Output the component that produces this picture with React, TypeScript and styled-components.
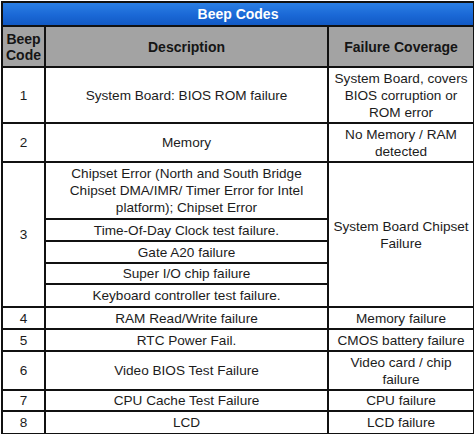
import React from "react";
import styled, { createGlobalStyle } from "styled-components";

const GlobalStyle = createGlobalStyle`
  html, body {
    margin: 0;
    padding: 0;
    background: #ffffff;
  }
  body {
    font-family: "Liberation Sans", Arial, sans-serif;
  }
`;

const Page = styled.div`
  width: 474px;
  height: 434px;
  overflow: hidden;
  padding: 1px 0 0 1px;
  box-sizing: border-box;
  background: #ffffff;
`;

const Sheet = styled.table`
  width: 472px;
  border-collapse: collapse;
  table-layout: fixed;
  border: 2px solid #111;
  font-size: 13.6px;
  line-height: 17px;
  color: #1c1c1c;
`;

const Row = styled.tr<{ $h: number }>`
  height: ${(p) => p.$h}px;
`;

const TitleCell = styled.th`
  padding: 0;
  background: linear-gradient(180deg, #2b7fe4 0%, #1a68d6 55%, #1259c4 100%);
  color: #ffffff;
  font-weight: bold;
  font-size: 14px;
  text-align: center;
  vertical-align: middle;
  border: 2px solid #111;
`;

const HeadCell = styled.th`
  padding: 0;
  background: #a3a3a3;
  color: #151515;
  font-weight: bold;
  font-size: 14px;
  line-height: 16px;
  text-align: center;
  vertical-align: middle;
  border: 2px solid #111;
`;

const Cell = styled.td`
  padding: 0;
  text-align: center;
  vertical-align: middle;
  border: 2px solid #111;
  overflow: hidden;
  white-space: nowrap;
`;

type Beep = {
  code: string;
  parts: { text: React.ReactNode; h: number }[];
  coverage: React.ReactNode;
};

const beeps: Beep[] = [
  {
    code: "1",
    parts: [{ text: "System Board: BIOS ROM failure", h: 56 }],
    coverage: (
      <>
        System Board, covers
        <br />
        BIOS corruption or
        <br />
        ROM error
      </>
    ),
  },
  {
    code: "2",
    parts: [{ text: "Memory", h: 39 }],
    coverage: (
      <>
        No Memory / RAM
        <br />
        detected
      </>
    ),
  },
  {
    code: "3",
    parts: [
      {
        text: (
          <>
            Chipset Error (North and South Bridge
            <br />
            Chipset DMA/IMR/ Timer Error for Intel
            <br />
            platform); Chipset Error
          </>
        ),
        h: 57,
      },
      { text: "Time-Of-Day Clock test failure.", h: 22 },
      { text: "Gate A20 failure", h: 22 },
      { text: "Super I/O chip failure", h: 21 },
      { text: "Keyboard controller test failure.", h: 23 },
    ],
    coverage: (
      <>
        System Board Chipset
        <br />
        Failure
      </>
    ),
  },
  { code: "4", parts: [{ text: "RAM Read/Write failure", h: 22 }], coverage: "Memory failure" },
  { code: "5", parts: [{ text: "RTC Power Fail.", h: 22 }], coverage: "CMOS battery failure" },
  {
    code: "6",
    parts: [{ text: "Video BIOS Test Failure", h: 39 }],
    coverage: (
      <>
        Video card / chip
        <br />
        failure
      </>
    ),
  },
  { code: "7", parts: [{ text: "CPU Cache Test Failure", h: 21 }], coverage: "CPU failure" },
  { code: "8", parts: [{ text: "LCD", h: 23 }], coverage: "LCD failure" },
];

export default function App() {
  return (
    <Page>
      <GlobalStyle />
      <Sheet>
        <colgroup>
          <col style={{ width: 43 }} />
          <col style={{ width: 283 }} />
          <col style={{ width: 146 }} />
        </colgroup>
        <thead>
          <Row $h={24}>
            <TitleCell colSpan={3}>Beep Codes</TitleCell>
          </Row>
          <Row $h={41}>
            <HeadCell>
              Beep
              <br />
              Code
            </HeadCell>
            <HeadCell>Description</HeadCell>
            <HeadCell>Failure Coverage</HeadCell>
          </Row>
        </thead>
        <tbody>
          {beeps.map((b) =>
            b.parts.map((part, i) => (
              <Row $h={part.h} key={`${b.code}-${i}`}>
                {i === 0 && <Cell rowSpan={b.parts.length}>{b.code}</Cell>}
                <Cell>{part.text}</Cell>
                {i === 0 && <Cell rowSpan={b.parts.length}>{b.coverage}</Cell>}
              </Row>
            ))
          )}
        </tbody>
      </Sheet>
    </Page>
  );
}
